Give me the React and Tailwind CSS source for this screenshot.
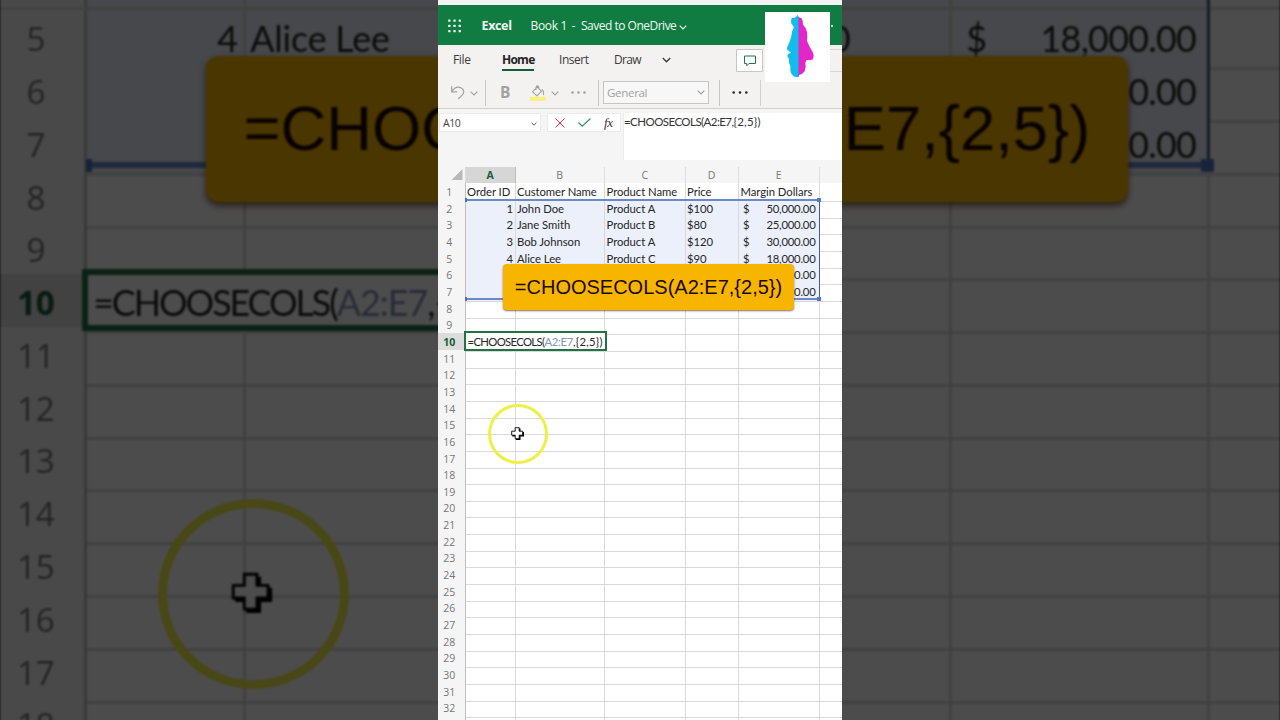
import clsx from "clsx";

const COLUMNS = ["A", "B", "C", "D", "E"];

const ORDERS = [
  { id: 1, customer: "John Doe", product: "Product A", price: "$100", margin: "50,000.00" },
  { id: 2, customer: "Jane Smith", product: "Product B", price: "$80", margin: "25,000.00" },
  { id: 3, customer: "Bob Johnson", product: "Product A", price: "$120", margin: "30,000.00" },
  { id: 4, customer: "Alice Lee", product: "Product C", price: "$90", margin: "18,000.00" },
  { id: "", customer: "", product: "", price: "", margin: "00.00" },
  { id: "", customer: "", product: "", price: "", margin: "00.00" },
];

const ROWS = Array.from({ length: 33 }, (_, i) => i + 1);

const GRID = "grid grid-cols-[27.5px_50px_89.5px_80.5px_53px_81.5px_1fr]";

function Chevron({ className }) {
  return (
    <svg viewBox="0 0 8 5" className={className} fill="none" stroke="currentColor" strokeWidth="1.2">
      <path d="M0.7 0.7 4 4 7.3 0.7" />
    </svg>
  );
}

function TitleBar() {
  return (
    <div className="flex h-[40px] shrink-0 items-center bg-[#107c41] pt-[2px] text-[#f1f8f3]">
      <svg viewBox="0 0 14 14" className="ml-[10px] h-[14px] w-[14px] shrink-0" fill="currentColor">
        {[0, 5.2, 10.4].map((y) =>
          [0, 5.2, 10.4].map((x) => <rect key={`${x}-${y}`} x={x + 0.2} y={y + 0.5} width="2.3" height="2.3" rx="0.5" />)
        )}
      </svg>
      <span className="ml-[19.5px] w-[49px] text-[12.5px] font-bold tracking-[-0.35px]">Excel</span>
      <span className="w-[41px] text-[12px] tracking-[-0.3px]">Book 1</span>
      <span className="w-[9.5px] text-[12px]">-</span>
      <span className="text-[12px] tracking-[-0.5px] whitespace-nowrap">Saved to OneDrive</span>
      <Chevron className="mt-[2px] ml-[3px] h-[5px] w-[8px]" />
    </div>
  );
}

function Tabs() {
  return (
    <div className="flex h-[33px] shrink-0 text-[12px] leading-[29px] tracking-[-0.35px] text-[#3b3a39]">
      <span className="ml-[15px] w-[49px]">File</span>
      <span className="flex w-[57px] flex-col font-bold text-[#252423]">
        <span className="h-[24px] tracking-[-0.75px]">Home</span>
        <span className="h-[2px] w-[32px] bg-[#185c37]" />
      </span>
      <span className="w-[55px] tracking-[-0.45px]">Insert</span>
      <span className="w-[48px] tracking-[-0.7px]">Draw</span>
      <Chevron className="mt-[12px] h-[6px] w-[9px]" />
      <div className="mt-[4px] ml-auto flex h-[23px] w-[106px]">
        <span className="flex h-[23px] w-[27px] items-center justify-center rounded-[1px] border border-[#c8c6c4] bg-white">
          <svg viewBox="0 0 12 12" className="h-[12px] w-[12px]" fill="none" stroke="#217346" strokeWidth="1">
            <path d="M0.5 1h11v7.5H5L2.8 10.8V8.5H0.5z" />
          </svg>
        </span>
        <span className="ml-[5px] h-[23px] grow border-y border-[#d8d6d4]" />
      </div>
    </div>
  );
}

function Toolbar() {
  return (
    <div className="flex h-[31px] shrink-0 items-center border-b border-[#d2d0ce] pb-px text-[#a3a19f]">
      <svg viewBox="0 0 14 15" className="ml-[13px] h-[15px] w-[14px]" fill="none" stroke="currentColor" strokeWidth="1.2">
        <path d="M0.7 1.2v5.6h5.6M1 6.5C3 3 6.5 1.3 9.8 2.7c3.2 1.5 3.8 4.8 1.6 7.1L7.2 14" />
      </svg>
      <Chevron className="mt-[2px] ml-[5px] h-[5px] w-[8px]" />
      <span className="ml-[7px] h-[26px] w-px bg-[#c8c6c4]" />
      <span className="ml-[14px] w-[30px] text-[15.5px] font-bold">B</span>
      <svg viewBox="0 0 16 17" className="h-[17px] w-[16px]" fill="none" stroke="currentColor" strokeWidth="1.1">
        <rect x="0" y="12.8" width="16" height="4" fill="#f6f27c" stroke="none" />
        <path d="M2.5 7.8 7.3 3l4.2 4.2-4.6 4.6zM6 6V4.2C6 1 8.8 1 8.8 4.5M12 5.5c1.6 1 1.7 3.5 1.5 5.5" />
      </svg>
      <Chevron className="mt-[1px] ml-[5px] h-[5px] w-[8px]" />
      <svg viewBox="0 0 15 3" className="ml-[12px] h-[3px] w-[15px]" fill="currentColor">
        <circle cx="1.5" cy="1.5" r="1.3" />
        <circle cx="7.5" cy="1.5" r="1.3" />
        <circle cx="13.5" cy="1.5" r="1.3" />
      </svg>
      <span className="ml-[12px] h-[26px] w-px bg-[#c8c6c4]" />
      <span className="ml-[4px] flex h-[23px] w-[106px] items-center justify-between border border-[#c8c6c4] bg-[#f7f7f7] px-[3px] text-[11.5px] tracking-[-0.3px]">
        General
        <Chevron className="h-[5px] w-[8px]" />
      </span>
      <span className="ml-[10px] h-[26px] w-px bg-[#c8c6c4]" />
      <svg viewBox="0 0 16 3" className="ml-[12px] h-[3px] w-[16px]" fill="#252423">
        <circle cx="1.7" cy="1.5" r="1.3" />
        <circle cx="8" cy="1.5" r="1.3" />
        <circle cx="14.3" cy="1.5" r="1.3" />
      </svg>
      <span className="ml-[12px] h-[26px] w-px bg-[#d2d0ce]" />
    </div>
  );
}

function FormulaBar() {
  return (
    <div className="flex h-[58px] shrink-0 bg-[#f5f5f5] pt-[4px]">
      <div className="ml-px flex h-[19px] w-[102px] items-center justify-between border border-[#ebebeb] bg-white pt-[2px] pr-[3px] pl-[3px] text-[10.5px] tracking-[-0.4px] text-[#444]">
        A10
        <Chevron className="h-[4px] w-[6px]" />
      </div>
      <div className="ml-[6px] flex h-[19px] w-[74px] items-center border border-[#ebebeb] bg-white">
        <svg viewBox="0 0 10 10" className="ml-[7px] h-[10px] w-[10px]" fill="none" stroke="#d13438" strokeWidth="1">
          <path d="M0.5 0.5 9.5 9.5M9.5 0.5 0.5 9.5" />
        </svg>
        <svg viewBox="0 0 13 9" className="ml-[13px] h-[9px] w-[13px]" fill="none" stroke="#2f9058" strokeWidth="1.1">
          <path d="M0.5 4.5 4.2 8.2 12.5 0.5" />
        </svg>
        <span className="ml-[13px] font-['Liberation_Serif',serif] text-[13px] leading-none tracking-[-0.3px] text-[#333] italic">
          fx
        </span>
      </div>
      <div className="ml-[2px] h-[47px] grow border-l border-[#ebebeb] bg-white font-[Lato,sans-serif] text-[11.5px] leading-[18px] tracking-[-0.55px] text-[#333]">
        =CHOOSECOLS(A2:E7,<span className="tracking-[0.2px]">{"{2,5})"}</span>
      </div>
    </div>
  );
}

function ColumnHeader() {
  return (
    <div className={clsx(GRID, "h-[16px] shrink-0 bg-[#f5f5f5] text-center text-[10.5px] leading-[16px] text-[#767676]")}>
      <span className="flex justify-end border-r border-[#d9d9d9] pt-[2px] pr-[2px]">
        <svg viewBox="0 0 12 12" className="h-[11px] w-[12px]" fill="#b9b9b9">
          <path d="M12 0v12H0z" />
        </svg>
      </span>
      {COLUMNS.map((name) => (
        <span
          key={name}
          className={clsx(
            "border-r border-b",
            name === "A" ? "border-r-[#bdbdbd] border-b-[#217346] bg-[#d6d6d6] font-bold text-[#185c37]" : "border-[#dedede]"
          )}
        >
          {name}
        </span>
      ))}
      <span className="border-b border-[#dedede]" />
    </div>
  );
}

function Row({ number, blank }) {
  const order = ORDERS[number - 2];
  const cell = clsx(
    "overflow-hidden border-r border-b border-[#d9d9d9] pl-[1.5px] whitespace-nowrap",
    order && "bg-[#ebf0fa]"
  );

  return (
    <div className={clsx(GRID, "h-[16.66px] font-[Lato,sans-serif] text-[11.3px] leading-[18.2px] tracking-[-0.05px] text-[#262626]")}>
      <span
        className={clsx(
          "border-r border-b border-r-[#bfbfbf] border-b-[#dedede] pr-[4px] text-center font-['Open_Sans',sans-serif] text-[10.5px] leading-[18px] tracking-[-0.1px]",
          number === 10 ? "bg-[#dcdcdc] font-bold text-[#185c37]" : "bg-[#f5f5f5] text-[#767676]"
        )}
      >
        {!blank && number}
      </span>
      <span className={clsx(cell, order && "pr-[1.5px] text-right")}>{number === 1 && !blank ? "Order ID" : !blank && order?.id}</span>
      <span className={cell}>{number === 1 && !blank ? "Customer Name" : !blank && order?.customer}</span>
      <span className={cell}>{number === 1 && !blank ? "Product Name" : !blank && order?.product}</span>
      <span className={cell}>{number === 1 && !blank ? "Price" : !blank && order?.price}</span>
      <span className={clsx(cell, order ? "flex justify-between pr-[3.5px] pl-[4.5px] tracking-[-0.22px]" : "pl-[2px]")}>
        {number === 1 && !blank && "Margin Dollars"}
        {order && !blank && (
          <>
            <span>{order.id && "$"}</span>
            <span>{order.margin}</span>
          </>
        )}
      </span>
      <span className="border-b border-[#d9d9d9]" />
    </div>
  );
}

function Sheet({ firstRow = 1, lastRow = 32 }) {
  return (
    <div className="relative min-h-0 grow overflow-hidden bg-white">
      {ROWS.map((n) => (
        <Row key={n} number={n} blank={n < firstRow || n > lastRow} />
      ))}

      {/* Range highlight for A2:E7 */}
      <div className="absolute top-[15.5px] left-[27px] h-[101px] w-[355px] border-y-2 border-r border-y-[#6a89cb] border-r-[#3f6180]">
        <span className="absolute -top-[3px] left-0 h-[4px] w-[2px] bg-[#4c72bf]" />
        <span className="absolute -top-[3px] -right-[2px] h-[4px] w-[4px] bg-[#5478c4]" />
        <span className="absolute -bottom-[3px] left-0 h-[4px] w-[2px] bg-[#4c72bf]" />
        <span className="absolute -right-[2px] -bottom-[3px] h-[4px] w-[4px] bg-[#5478c4]" />
      </div>

      {/* Cell being edited */}
      <div className="absolute top-[148.3px] left-[26px] h-[19.5px] w-[143px] border-2 border-[#217346] bg-white pl-[1.5px] font-[Lato,sans-serif] text-[11.3px] leading-[17.4px] tracking-[-0.65px] whitespace-nowrap text-[#262626]">
        =CHOOSECOLS(<span className="tracking-[-0.3px] text-[#8592b8]">A2:E7</span>
        <span className="tracking-[0.25px]">{",{2,5})"}</span>
      </div>

      {/* Formula callout */}
      <div className="absolute top-[81px] left-[65px] h-[46px] w-[291px] rounded-[4px] bg-[#f8b500] text-center font-['Liberation_Sans',sans-serif] text-[20px] leading-[46px] text-[#1c0a00] shadow-[0_1px_2px_rgba(90,50,0,0.7)]">
        =CHOOSECOLS(A2:E7,{"{2,5}"})
      </div>

      {/* Cursor with click ring */}
      <div className="absolute top-[221px] left-[50px] flex h-[60px] w-[60px] items-center justify-center rounded-full border-[3px] border-[#eef04a]">
        <svg viewBox="0 0 13 13" className="mr-px mb-px h-[13px] w-[13px]">
          <path d="M4.8 1.5h4.7V5H13v4.5H9.5V13H4.8V9.5H1.3V5h3.5z" fill="#000" />
          <path d="M4.2 0.7h4v3.5h3.5v4H8.2v3.5h-4V8.2H0.7v-4h3.5z" fill="#fff" stroke="#000" strokeWidth="0.9" />
        </svg>
      </div>
    </div>
  );
}

function ExcelScreen() {
  return (
    <div className="flex h-[720px] w-[404px] shrink-0 flex-col overflow-hidden bg-[#f3f2f0] font-['Open_Sans',sans-serif]">
      <div className="h-[5px] shrink-0 bg-[#f2f3f2]" />
      <TitleBar />
      <Tabs />
      <Toolbar />
      <FormulaBar />
      <ColumnHeader />
      <Sheet />
    </div>
  );
}

// Enlarged, dimmed sheet behind the portrait frame
function Backdrop() {
  return (
    <div className="absolute inset-0 flex items-center justify-center overflow-hidden" aria-hidden="true">
      <div className="flex h-[720px] w-[404px] shrink-0 flex-col pt-[183px] blur-[0.3px] [zoom:3.168]">
        <Sheet firstRow={5} lastRow={18} />
      </div>
      <div className="absolute inset-0 bg-black/70" />
    </div>
  );
}

function ChannelLogo() {
  return (
    <div className="absolute top-[12px] left-[327px] h-[70px] w-[65px] bg-white">
      <svg viewBox="0 0 195 210" className="h-[70px] w-[65px]">
        <path
          d="M99 8l-4 5-6 4-9 1-2 9 1 8 6 7 1 5-5 12-2 14-6 18-7 17 1 6 6 4 5 4-9 4-2 6 5 10v10l4 10v14l4 11 8 7 12 2z"
          fill="#12bdee"
        />
        <path
          d="M101 16l8 2 4 8 1 12 8 10 4 12 1 14-1 12 3 8 5 10 8 14 4 12-2 12-10 3-9-1-4 8 1 12-3 14-8 8-12 4z"
          fill="#e326c8"
        />
        <path d="M100.5 14v180" stroke="#7a6fd0" strokeWidth="3" />
      </svg>
    </div>
  );
}

export default function App() {
  return (
    <div className="relative flex h-[720px] w-[1280px] justify-center overflow-hidden bg-black">
      <Backdrop />
      <div className="relative">
        <ExcelScreen />
        <ChannelLogo />
        <span className="absolute top-[25px] left-[393px] h-[2px] w-[2px] rounded-full bg-white" />
      </div>
    </div>
  );
}
